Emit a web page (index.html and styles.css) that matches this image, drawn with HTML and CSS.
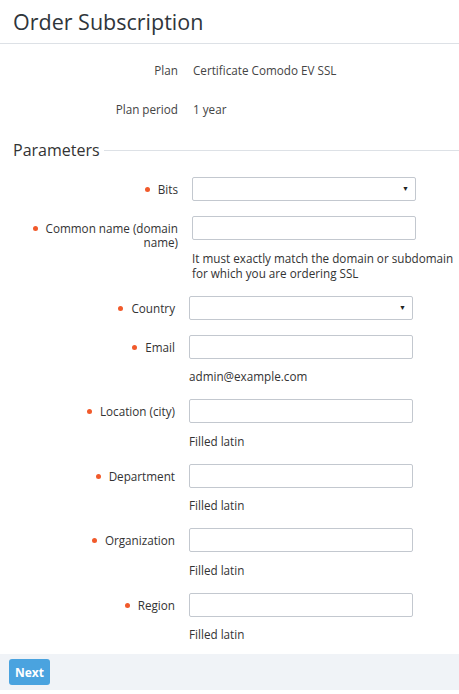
FILE: index.html
```html
<html>
    <head>
        <title>Order Subscription</title>
        <link rel="stylesheet" href="styles.css">
    </head>
    <body>
        <div class="page-header">
            <h1>Order Subscription</h1>
        </div>
        <div class="content">
            <div class="info-row">
                <div class="info-label">Plan</div>
                <div class="info-value">Certificate Comodo EV SSL</div>
            </div>
            <div class="info-row">
                <div class="info-label">Plan period</div>
                <div class="info-value">1 year</div>
            </div>

            <div class="legend">Parameters</div>

            <div class="group">
                <div class="form-row">
                    <label class="required">Bits</label>
                    <div class="field">
                        <div class="select"><span class="arrow">&#9660;</span></div>
                    </div>
                </div>
                <div class="form-row">
                    <label class="required">Common name (domain name)</label>
                    <div class="field">
                        <div class="input"></div>
                        <div class="hint">It must exactly match the domain or subdomain for which you are ordering SSL</div>
                    </div>
                </div>
            </div>

            <div class="group shifted">
                <div class="form-row">
                    <label class="required">Country</label>
                    <div class="field">
                        <div class="select"><span class="arrow">&#9660;</span></div>
                    </div>
                </div>
                <div class="form-row">
                    <label class="required">Email</label>
                    <div class="field">
                        <div class="input"></div>
                        <div class="hint">admin@example.com</div>
                    </div>
                </div>
                <div class="form-row">
                    <label class="required">Location (city)</label>
                    <div class="field">
                        <div class="input"></div>
                        <div class="hint">Filled latin</div>
                    </div>
                </div>
                <div class="form-row">
                    <label class="required">Department</label>
                    <div class="field">
                        <div class="input"></div>
                        <div class="hint">Filled latin</div>
                    </div>
                </div>
                <div class="form-row">
                    <label class="required">Organization</label>
                    <div class="field">
                        <div class="input"></div>
                        <div class="hint">Filled latin</div>
                    </div>
                </div>
                <div class="form-row">
                    <label class="required">Region</label>
                    <div class="field">
                        <div class="input"></div>
                        <div class="hint">Filled latin</div>
                    </div>
                </div>
            </div>
        </div>
        <div class="footer">
            <button class="btn-primary">Next</button>
        </div>
    </body>
</html>
```

FILE: styles.css
```css
body {
    margin: 0;
    font-family: "Open Sans", "Liberation Sans", sans-serif;
    font-size: 11.7px;
    color: #333333;
    background-color: #ffffff;
}

.page-header {
    height: 43px;
    padding: 0 13px;
    border-bottom: 1px solid #dde1e6;
    display: flex;
    align-items: center;
}

.page-header h1 {
    margin: 0;
    font-size: 21.5px;
    font-weight: normal;
    line-height: 27px;
    color: #2f353b;
}

.content {
    padding-top: 18px;
}

.info-row {
    display: flex;
    line-height: 17px;
    margin-bottom: 22px;
}

.info-label {
    width: 178px;
    text-align: right;
    color: #444444;
}

.info-value {
    margin-left: 15px;
    color: #444444;
}

.legend {
    display: flex;
    align-items: center;
    margin: 0 0 17px 13px;
    font-size: 16px;
    line-height: 20px;
    color: #333333;
}

.legend::after {
    content: "";
    flex: 1;
    height: 1px;
    margin-left: 4px;
    background-color: #dde1e6;
}

.form-row {
    display: flex;
    margin-bottom: 15px;
}

.group:last-child .form-row:last-child {
    margin-bottom: 12px;
}

.form-row label {
    width: 166px;
    padding-left: 12px;
    padding-top: 5px;
    text-align: right;
    line-height: 14px;
    color: #333333;
}

.group.shifted .form-row label {
    width: 163px;
}

.group.shifted .field {
    margin-left: 14px;
}

.required::before {
    content: "";
    display: inline-block;
    width: 5px;
    height: 5px;
    border-radius: 50%;
    background-color: #f15a2b;
    margin-right: 8px;
    vertical-align: 2px;
}

.field {
    margin-left: 14px;
    width: 224px;
}

.input,
.select {
    box-sizing: border-box;
    height: 24px;
    width: 224px;
    border: 1px solid #c3c8cf;
    border-radius: 2px;
    background-color: #ffffff;
}

.select {
    position: relative;
}

.arrow {
    position: absolute;
    right: 6px;
    top: 6px;
    font-size: 7px;
    color: #222222;
}

.hint {
    margin-top: 10.5px;
    width: 275px;
    line-height: 15px;
    color: #333333;
}

.footer {
    height: 36px;
    background-color: #f0f3f7;
    padding-left: 9px;
    display: flex;
    align-items: center;
}

.btn-primary {
    height: 26px;
    width: 41px;
    padding: 0;
    border: none;
    border-radius: 3px;
    background-color: #4aa3df;
    color: #ffffff;
    font-family: "Open Sans", "Liberation Sans", sans-serif;
    font-size: 12px;
    font-weight: bold;
}
```
